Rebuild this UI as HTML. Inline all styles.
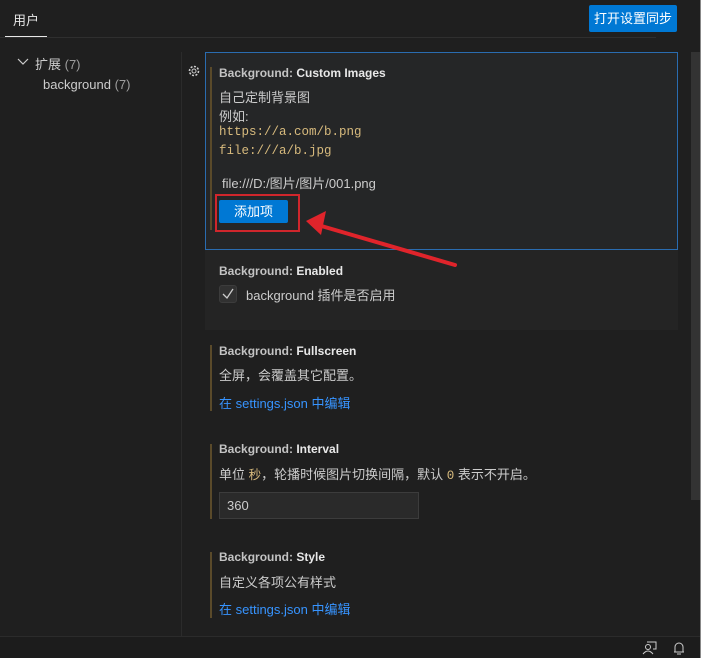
<!DOCTYPE html>
<html><head><meta charset="utf-8"><style>
*{margin:0;padding:0;box-sizing:border-box}
body{width:701px;height:658px;background:#1f1f1f;position:relative;overflow:hidden;font-family:"Segoe UI","Liberation Sans","Noto Sans CJK SC",sans-serif;font-size:13px;color:#cccccc}
.a{position:absolute;white-space:nowrap}
.t{color:#c3c3c3;font-weight:bold;font-size:12px}
.t b{color:#e8e8e8}
.mono{font-family:"Liberation Mono",monospace;color:#d7ba7d;font-size:12.5px}
.bar{position:absolute;left:210px;width:2px;background:#5a4a2a}
.link{color:#3794ff}
</style></head><body>
<div class="a" style="left:13px;top:10px;color:#e7e7e7;font-size:13px">用户</div>
<div class="a" style="left:5px;top:36px;width:42px;height:1px;background:#e7e7e7"></div>
<div class="a" style="left:0;top:37px;width:656px;height:1px;background:#2f2f2f"></div>
<div class="a" style="left:589px;top:5px;width:88px;height:27px;background:#0078d4;border-radius:2px;color:#fff;text-align:center;line-height:27px;font-size:13px">打开设置同步</div>
<svg class="a" style="left:17px;top:57px" width="12" height="10"><path d="M1 2 L6 7 L11 2" stroke="#cccccc" stroke-width="1.2" fill="none"/></svg>
<div class="a" style="left:35px;top:54px;color:#cccccc">扩展 <span style="color:#9d9d9d">(7)</span></div>
<div class="a" style="left:43px;top:77px;color:#cccccc">background <span style="color:#9d9d9d">(7)</span></div>
<div class="a" style="left:181px;top:52px;width:1px;height:584px;background:#2b2b2b"></div>
<svg class="a" style="left:187px;top:64px" width="14" height="14"><circle cx="7" cy="7" r="2" stroke="#ccc" fill="none"/><circle cx="7" cy="7" r="4.5" stroke="#ccc" stroke-width="1.6" stroke-dasharray="2 1.5" fill="none"/></svg>
<div class="a" style="left:205px;top:52px;width:473px;height:198px;background:#252627;border:1px solid #2a6cb0"></div>
<div class="bar" style="top:67px;height:163px"></div>
<div class="a t" style="left:219px;top:66px">Background: <b>Custom Images</b></div>
<div class="a" style="left:219px;top:87px">自己定制背景图</div>
<div class="a" style="left:219px;top:106px">例如:</div>
<div class="a mono" style="left:219px;top:125px">https://a.com/b.png</div>
<div class="a mono" style="left:219px;top:144px">file:///a/b.jpg</div>
<div class="a" style="left:222px;top:173px">file:///D:/图片/图片/001.png</div>
<div class="a" style="left:219px;top:200px;width:69px;height:23px;background:#0078d4;border-radius:2px;color:#fff;text-align:center;line-height:23px">添加项</div>
<div class="a" style="left:215px;top:194px;width:85px;height:38px;border:2px solid #d0262c"></div>
<div class="a" style="left:205px;top:250px;width:473px;height:80px;background:#242424"></div>
<div class="a t" style="left:219px;top:264px">Background: <b>Enabled</b></div>
<div class="a" style="left:219px;top:285px;width:18px;height:18px;border:1px solid #3c3c3c;background:#313131;border-radius:3px"></div>
<svg class="a" style="left:219px;top:285px" width="18" height="18"><path d="M4 9 L8 13 L14 4" stroke="#ccc" stroke-width="1.3" fill="none"/></svg>
<div class="a" style="left:246px;top:285px">background 插件是否启用</div>
<svg class="a" style="left:0;top:0" width="701" height="658"><path d="M455 265 L318 225" stroke="#e0242b" stroke-width="4" stroke-linecap="round"/><path d="M306 221 L326 211 L321 235 Z" fill="#e0242b"/></svg>
<div class="bar" style="top:345px;height:66px"></div>
<div class="a t" style="left:219px;top:344px">Background: <b>Fullscreen</b></div>
<div class="a" style="left:219px;top:365px">全屏，会覆盖其它配置。</div>
<div class="a link" style="left:219px;top:393px">在 settings.json 中编辑</div>
<div class="bar" style="top:444px;height:75px"></div>
<div class="a t" style="left:219px;top:442px">Background: <b>Interval</b></div>
<div class="a" style="left:219px;top:464px">单位 <span class="mono">秒</span>，轮播时候图片切换间隔，默认 <span class="mono">0</span> 表示不开启。</div>
<div class="a" style="left:219px;top:492px;width:200px;height:27px;background:#2a2a2a;border:1px solid #3c3c3c;padding-left:7px;line-height:25px">360</div>
<div class="bar" style="top:552px;height:66px"></div>
<div class="a t" style="left:219px;top:550px">Background: <b>Style</b></div>
<div class="a" style="left:219px;top:572px">自定义各项公有样式</div>
<div class="a link" style="left:219px;top:599px">在 settings.json 中编辑</div>
<div class="a" style="left:691px;top:52px;width:9px;height:448px;background:#333"></div>
<div class="a" style="left:0;top:636px;width:701px;height:22px;background:#1c1c1c;border-top:1px solid #2b2b2b"></div>
<svg class="a" style="left:642px;top:640px" width="16" height="16"><circle cx="6" cy="7" r="2.5" stroke="#ccc" fill="none"/><path d="M1 14 Q6 8 11 14 M5 2 H14 V9 H11" stroke="#ccc" fill="none"/></svg>
<svg class="a" style="left:672px;top:640px" width="14" height="16"><path d="M3 12 V7 A4 4 0 0 1 11 7 V12 H2 H12 M5 14 H9" stroke="#ccc" fill="none"/></svg>
<div class="a" style="left:700px;top:0;width:1px;height:658px;background:#888"></div>
</body></html>
